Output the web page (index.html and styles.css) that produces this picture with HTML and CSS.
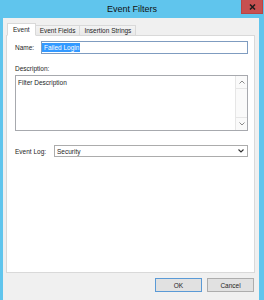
FILE: index.html
```
<!DOCTYPE html>
<html>
<head>
<meta charset="utf-8">
<link rel="stylesheet" href="styles.css">
</head>
<body>
<div class="window">
  <div class="titlebar">
    <div class="title">Event Filters</div>
    <div class="close">
      <svg width="7" height="6" viewBox="0 0 7 6"><path d="M1 0.5 L6 5.5 M6 0.5 L1 5.5" stroke="#1c1c1c" stroke-width="1.5" fill="none"/></svg>
    </div>
  </div>
  <div class="client">
    <div class="tabs">
      <div class="tab active">Event</div>
      <div class="tab">Event Fields</div>
      <div class="tab">Insertion Strings</div>
    </div>
    <div class="panel">
      <div class="row name-row">
        <span class="label name-label">Name:</span>
        <div class="field name-field"><span class="sel">Failed Login</span></div>
      </div>
      <div class="label desc-label">Description:</div>
      <div class="textarea">
        <div class="ta-text">Filter Description</div>
        <div class="scrollbar">
          <div class="sb-btn sb-up"><svg width="6" height="4" viewBox="0 0 6 4"><polyline points="0.5,3.5 3,1 5.5,3.5" stroke="#8a8a8a" stroke-width="1" fill="none"/></svg></div>
          <div class="sb-track"></div>
          <div class="sb-btn sb-down"><svg width="6" height="4" viewBox="0 0 6 4"><polyline points="0.5,0.5 3,3 5.5,0.5" stroke="#8a8a8a" stroke-width="1" fill="none"/></svg></div>
        </div>
      </div>
      <div class="row log-row">
        <span class="label log-label">Event Log:</span>
        <div class="field select">
          <span class="select-text">Security</span>
          <svg width="6" height="4" viewBox="0 0 6 4"><polyline points="0.5,0.5 3,3 5.5,0.5" stroke="#333" stroke-width="1.1" fill="none"/></svg>
        </div>
      </div>
    </div>
    <div class="buttons">
      <div class="btn default">OK</div>
      <div class="btn">Cancel</div>
    </div>
  </div>
</div>
</body>
</html>
```
FILE: styles.css
```
html, body {
  margin: 0;
  padding: 0;
  overflow: hidden;
}
body {
  font-family: "Liberation Sans", Arial, sans-serif;
  color: #1e1e1e;
}
.window {
  width: 264px;
  height: 300px;
  background: #60c5ed;
  display: flex;
  flex-direction: column;
  overflow: hidden;
}
.titlebar {
  height: 18px;
  display: flex;
  align-items: flex-start;
  flex-shrink: 0;
}
.title {
  flex: 1;
  text-align: center;
  font-size: 9px;
  line-height: 19px;
  padding-left: 23px;
  color: #111;
}
.close {
  width: 22px;
  height: 14px;
  flex-shrink: 0;
  margin-right: 1px;
  background: #c75050;
  box-sizing: border-box;
  border: 1px solid #b84545;
  border-top: none;
  display: flex;
  align-items: center;
  justify-content: center;
}
.client {
  flex: 1;
  background: #f0f0f0;
  margin: 0 5px 0 3px;
  padding: 5px 4px 0 3px;
  display: flex;
  flex-direction: column;
}
.tabs {
  display: flex;
  align-items: flex-end;
  height: 13px;
  padding-left: 1px;
  margin-bottom: -1px;
  position: relative;
  z-index: 1;
}
.tab {
  box-sizing: border-box;
  height: 11px;
  border: 1px solid #d9d9d9;
  border-left: none;
  background: linear-gradient(#f3f3f3, #e9e9e9);
  font-size: 6.5px;
  padding: 0 4px;
  display: flex;
  align-items: center;
}
.tab.active {
  height: 13px;
  background: #fff;
  border-left: 1px solid #d9d9d9;
  border-bottom: 1px solid #fff;
  padding: 0 5px;
}
.panel {
  box-sizing: border-box;
  height: 238px;
  border: 1px solid #d9d9d9;
  background: #fff;
  padding: 5px 6px 0 8px;
  display: flex;
  flex-direction: column;
}
.label {
  font-size: 6.5px;
  line-height: 9px;
}
.row {
  display: flex;
  align-items: center;
}
.name-row {
  height: 13px;
}
.name-label {
  width: 26px;
  flex-shrink: 0;
}
.field {
  flex: 1;
  box-sizing: border-box;
  display: flex;
  align-items: center;
  background: #fff;
  font-size: 6.5px;
}
.name-field {
  height: 13px;
  border: 1px solid #7f9cc0;
}
.sel {
  background: #3399ff;
  color: #fff;
  line-height: 9px;
  padding: 0 1px 0 2px;
}
.desc-label {
  margin-top: 10px;
}
.textarea {
  margin-top: 2px;
  height: 56px;
  box-sizing: border-box;
  border: 1px solid #a7a9ae;
  display: flex;
}
.ta-text {
  flex: 1;
  font-size: 6.5px;
  line-height: 9px;
  padding: 2px 2px;
}
.scrollbar {
  width: 11px;
  border-left: 1px solid #e6e6e6;
  background: #fafafa;
  display: flex;
  flex-direction: column;
}
.sb-btn {
  height: 12px;
  display: flex;
  align-items: center;
  justify-content: center;
}
.sb-up {
  border-bottom: 1px solid #e6e6e6;
}
.sb-down {
  border-top: 1px solid #e6e6e6;
}
.sb-track {
  flex: 1;
}
.log-row {
  margin-top: 14px;
  height: 12px;
}
.log-label {
  width: 39px;
  flex-shrink: 0;
}
.select {
  height: 12px;
  border: 1px solid #acacac;
  padding: 0 3px 0 2px;
  justify-content: space-between;
}
.buttons {
  display: flex;
  justify-content: flex-end;
  gap: 5px;
  margin-top: 5px;
  padding-right: 1px;
}
.btn {
  box-sizing: border-box;
  width: 47px;
  height: 14px;
  background: #e1e1e1;
  border: 1px solid #adadad;
  font-size: 6.5px;
  display: flex;
  align-items: center;
  justify-content: center;
}
.btn.default {
  border-color: #5a9ad6;
}
```
